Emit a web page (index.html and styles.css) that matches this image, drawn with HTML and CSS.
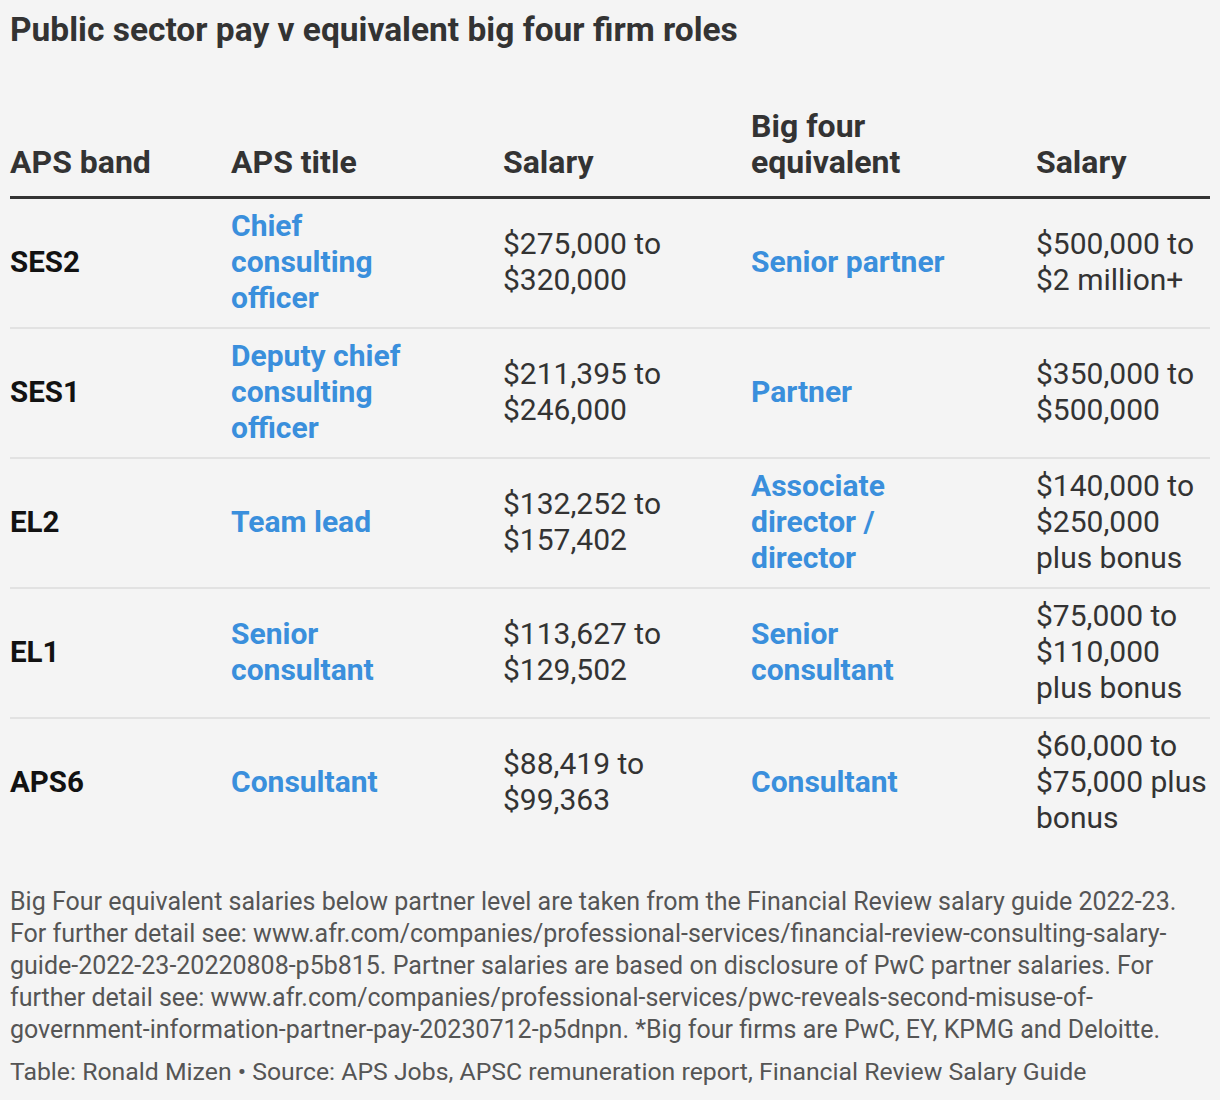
FILE: index.html
```html
<!DOCTYPE html>
<html lang="en">
<head>
<meta charset="utf-8">
<title>Public sector pay v equivalent big four firm roles</title>
<link rel="stylesheet" href="styles.css">
</head>
<body>
<div class="chart">
  <h1 class="title">Public sector pay v equivalent big four firm roles</h1>
  <table class="pay-table">
    <colgroup>
      <col class="c-band">
      <col class="c-title">
      <col class="c-salary">
      <col class="c-equiv">
      <col class="c-salary2">
    </colgroup>
    <thead>
      <tr>
        <th>APS band</th>
        <th class="th-title">APS title</th>
        <th>Salary</th>
        <th class="th-equiv">Big four equivalent</th>
        <th>Salary</th>
      </tr>
    </thead>
    <tbody>
      <tr>
        <td class="band">SES2</td>
        <td class="role aps-role">Chief consulting officer</td>
        <td>$275,000 to $320,000</td>
        <td class="role equiv-role">Senior partner</td>
        <td>$500,000 to $2 million+</td>
      </tr>
      <tr>
        <td class="band">SES1</td>
        <td class="role aps-role">Deputy chief consulting officer</td>
        <td>$211,395 to $246,000</td>
        <td class="role equiv-role">Partner</td>
        <td>$350,000 to $500,000</td>
      </tr>
      <tr>
        <td class="band">EL2</td>
        <td class="role aps-role">Team lead</td>
        <td>$132,252 to $157,402</td>
        <td class="role equiv-role">Associate director / director</td>
        <td>$140,000 to $250,000 plus bonus</td>
      </tr>
      <tr>
        <td class="band">EL1</td>
        <td class="role aps-role">Senior consultant</td>
        <td>$113,627 to $129,502</td>
        <td class="role equiv-role">Senior consultant</td>
        <td>$75,000 to $110,000 plus bonus</td>
      </tr>
      <tr>
        <td class="band">APS6</td>
        <td class="role aps-role">Consultant</td>
        <td>$88,419 to $99,363</td>
        <td class="role equiv-role">Consultant</td>
        <td>$60,000 to $75,000 plus bonus</td>
      </tr>
    </tbody>
  </table>
  <p class="notes">Big Four equivalent salaries below partner level are taken from the Financial Review salary guide 2022-23. For further detail see: www.afr.com/companies/professional-services/financial-review-consulting-salary-guide-2022-23-20220808-p5b815. Partner salaries are based on disclosure of PwC partner salaries. For further detail see: www.afr.com/companies/professional-services/pwc-reveals-second-misuse-of-government-information-partner-pay-20230712-p5dnpn. *Big four firms are PwC, EY, KPMG and Deloitte.</p>
  <p class="source">Table: Ronald Mizen • Source: APS Jobs, APSC remuneration report, Financial Review Salary Guide</p>
</div>
</body>
</html>
```
FILE: styles.css
```css
html, body {
  margin: 0;
  padding: 0;
  background: #f4f4f4;
}

body {
  font-family: Roboto, "Liberation Sans", sans-serif;
  color: #333333;
}

.chart {
  padding: 10px;
}

.title {
  margin: 0;
  font-size: 33.5px;
  line-height: 40px;
  font-weight: 700;
  color: #333333;
}

.pay-table {
  width: 1200px;
  margin-top: 48px;
  border-collapse: collapse;
  table-layout: fixed;
}

.c-band { width: 221px; }
.c-title { width: 272px; }
.c-salary { width: 248px; }
.c-equiv { width: 285px; }
.c-salary2 { width: 174px; }

.pay-table th {
  text-align: left;
  vertical-align: bottom;
  font-size: 32px;
  line-height: 36px;
  font-weight: 700;
  color: #333333;
  padding: 10px 40px 16px 0;
  border-bottom: 3px solid #333333;
}

.pay-table th.th-equiv {
  padding-right: 75px;
}

.pay-table th:last-child {
  padding-right: 0;
}

.pay-table td {
  vertical-align: middle;
  font-size: 30px;
  line-height: 36px;
  color: #333333;
  padding: 9px 40px 11px 0;
  border-bottom: 2px solid #e2e2e2;
}

.pay-table td.aps-role {
  padding-right: 72px;
}

.pay-table td.equiv-role {
  padding-right: 75px;
}

.pay-table td:last-child {
  padding-right: 0;
}

.pay-table tbody tr:last-child td {
  border-bottom: none;
}

.pay-table td.band {
  font-size: 29.5px;
  font-weight: 700;
  color: #121212;
}

.pay-table td.role {
  font-weight: 700;
  color: #3a8fdc;
}

.notes {
  margin: 39px 0 0;
  max-width: 1200px;
  font-size: 25px;
  line-height: 32px;
  color: #555555;
}

.source {
  margin: 10px 0 0;
  font-size: 24.8px;
  line-height: 32px;
  color: #555555;
}
```
